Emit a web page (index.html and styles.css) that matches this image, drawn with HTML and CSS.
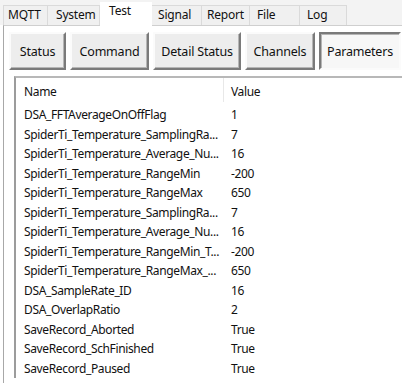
FILE: index.html
```html
<!DOCTYPE html>
<html lang="en">
<head>
  <meta charset="UTF-8">
  <title>Test - Parameters</title>
  <link rel="stylesheet" href="styles.css">
</head>
<body>
  <div class="tabs">
    <div class="tab">MQTT</div>
    <div class="tab">System</div>
    <div class="tab active">Test</div>
    <div class="tab">Signal</div>
    <div class="tab">Report</div>
    <div class="tab">File</div>
    <div class="tab">Log</div>
  </div>
  <div class="panel">
    <div class="buttons">
      <button class="btn b-status">Status</button>
      <button class="btn b-command">Command</button>
      <button class="btn b-detail">Detail Status</button>
      <button class="btn b-channels">Channels</button>
      <button class="btn b-params pressed">Parameters</button>
    </div>
    <div class="list">
      <div class="list-head">
        <div class="col-name">Name</div>
        <div class="col-value">Value</div>
      </div>
      <div id="rows"></div>
    </div>
  </div>

  <script>
    const params = [
      ["DSA_FFTAverageOnOffFlag", "1"],
      ["SpiderTi_Temperature_SamplingRa...", "7"],
      ["SpiderTi_Temperature_Average_Nu...", "16"],
      ["SpiderTi_Temperature_RangeMin", "-200"],
      ["SpiderTi_Temperature_RangeMax", "650"],
      ["SpiderTi_Temperature_SamplingRa...", "7"],
      ["SpiderTi_Temperature_Average_Nu...", "16"],
      ["SpiderTi_Temperature_RangeMin_T...", "-200"],
      ["SpiderTi_Temperature_RangeMax_...", "650"],
      ["DSA_SampleRate_ID", "16"],
      ["DSA_OverlapRatio", "2"],
      ["SaveRecord_Aborted", "True"],
      ["SaveRecord_SchFinished", "True"],
      ["SaveRecord_Paused", "True"]
    ];
    document.getElementById("rows").innerHTML = params.map(p => `
      <div class="row">
        <div class="col-name">${p[0]}</div>
        <div class="col-value">${p[1]}</div>
      </div>
    `).join('');
  </script>
</body>
</html>
```

FILE: styles.css
```css
body {
  margin: 0;
  padding: 0;
  background: #fff;
  color: #111;
  font-family: "Noto Sans", "Open Sans", sans-serif;
  font-size: 12px;
  width: 402px;
  height: 383px;
  overflow: hidden;
}
.tabs {
  display: flex;
  align-items: flex-end;
  height: 25px;
  padding-left: 3px;
  background: #f3f3f3;
  letter-spacing: -0.2px;
}
.tab {
  height: 20px;
  line-height: 17px;
  padding-left: 4px;
  background: #f0f0f0;
  border: 1px solid #dadada;
  border-bottom: none;
  border-left: none;
  box-sizing: border-box;
}
.tab:nth-child(1) { width: 45px; border-left: 1px solid #dadada; }
.tab:nth-child(2) { width: 52px; padding-left: 8px; }
.tab:nth-child(3) { width: 52px; }
.tab:nth-child(4) { width: 50px; padding-left: 6px; }
.tab:nth-child(5) { width: 48px; padding-left: 5px; }
.tab:nth-child(6) { width: 50px; padding-left: 7px; }
.tab:nth-child(7) { width: 47px; padding-left: 7px; }
.tab.active {
  height: 24px;
  line-height: 15px;
  padding-left: 9px;
  background: #fff;
  border-color: #fff;
  margin-bottom: -1px;
}
.panel {
  margin-left: 3px;
  border-left: 1px solid #a8a8a8;
  border-top: 1px solid #cfcfcf;
  height: 358px;
  background: #fff;
}
.buttons {
  display: flex;
  gap: 4px;
  padding: 6px 0 0 5px;
}
.btn {
  height: 38px;
  padding: 0;
  font: inherit;
  font-size: 12.5px;
  letter-spacing: -0.2px;
  color: #111;
  background: #ededed;
  border: 2px solid;
  border-color: #fbfbfb #7a7a7a #7a7a7a #fbfbfb;
  box-shadow: inset -1px -1px 0 #b5b5b5;
}
.b-status { width: 57px; }
.b-command { width: 79px; }
.b-detail { width: 88px; }
.b-channels { width: 70px; }
.b-params { width: 82px; }
.btn.pressed {
  background: #f7f7f7;
  border-color: #7a7a7a #fbfbfb #fbfbfb #7a7a7a;
  box-shadow: inset 1px 1px 0 #b5b5b5;
}
.list {
  margin: 6px 0 0 10px;
  border-left: 2px solid #9c9c9c;
  border-top: 2px solid #b8b8b8;
  padding-left: 8px;
  letter-spacing: -0.36px;
}
.list-head,
.row {
  display: flex;
  height: 19.5px;
  line-height: 19.5px;
  white-space: nowrap;
}
.list-head {
  height: 24px;
  line-height: 28px;
  margin-bottom: 3px;
}
.col-name {
  width: 207px;
}
.list-head .col-name {
  border-right: 1px solid #e8e8e8;
  width: 199px;
  margin-right: 7px;
}
```
